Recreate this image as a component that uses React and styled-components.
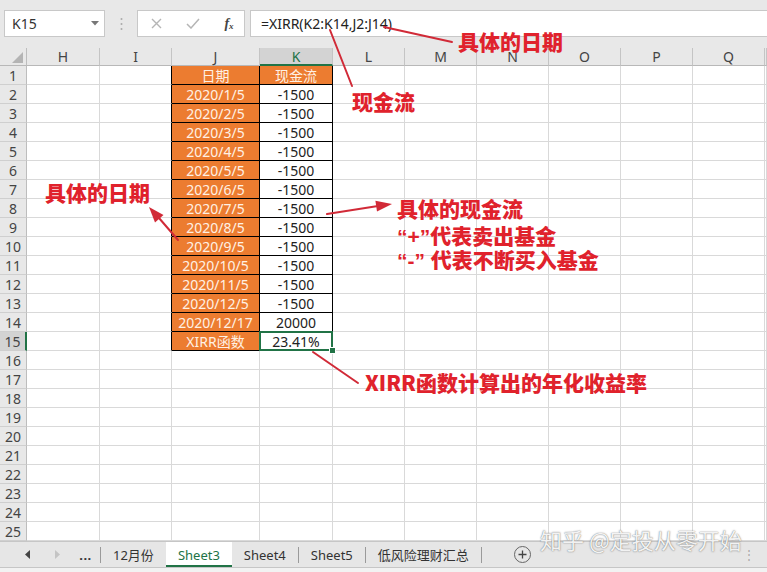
import React from 'react';
import styled, { createGlobalStyle } from 'styled-components';

const Global = createGlobalStyle`
  html, body { margin: 0; padding: 0; background: #fff; }
  body { font-family: "Noto Sans", "Noto Sans CJK SC", sans-serif; }
`;

const GREEN = '#217346';
const RED = '#e0222c';
const LINE_RED = '#d12a37';

const Page = styled.div`
  position: relative;
  width: 767px;
  height: 572px;
  overflow: hidden;
  display: flex;
  flex-direction: column;
  background: #fff;
  font-family: "Noto Sans", "Noto Sans CJK SC", sans-serif;
`;

const TopBar = styled.div`
  height: 48px;
  flex: none;
  box-sizing: border-box;
  padding: 10px 0 0 4px;
  background: #e8e8e8;
  display: flex;
  align-items: flex-start;
`;

const NameBox = styled.div`
  width: 101px;
  height: 27px;
  box-sizing: border-box;
  background: #fff;
  border: 1px solid #c8c8c8;
  display: flex;
  align-items: center;
  justify-content: space-between;
  padding: 0 5px 0 7px;
  font-size: 14px;
  color: #333;
`;

const Divider = styled.div`
  width: 32px;
  height: 27px;
  display: flex;
  align-items: center;
  justify-content: center;
`;

const ActionBox = styled.div`
  width: 108px;
  height: 27px;
  box-sizing: border-box;
  background: #fff;
  border: 1px solid #c8c8c8;
  display: grid;
  grid-template-columns: 36px 38px 34px;
  align-items: center;
  justify-items: center;
`;

const Fx = styled.span`
  font-family: "Liberation Serif", serif;
  font-style: italic;
  font-weight: bold;
  font-size: 14px;
  color: #444;
  & > sub {
    font-size: 9px;
    vertical-align: -1px;
  }
`;

const FormulaInput = styled.div`
  flex: 1;
  margin-left: 5px;
  height: 27px;
  box-sizing: border-box;
  background: #fff;
  border: 1px solid #c8c8c8;
  border-right: none;
  padding-left: 10px;
  display: flex;
  align-items: center;
  font-size: 14px;
  color: #222;
`;

const Sheet = styled.div`
  flex: none;
  display: grid;
  grid-template-columns: 27px 73px 72px 88px 73px 72px 72px 72px 72px 72px 72px 1fr;
  grid-template-rows: 18px repeat(25, 19px);
`;

const Corner = styled.div`
  box-sizing: border-box;
  background: #e8e8e8;
  border-right: 1px solid #bdbdbd;
  border-bottom: 1px solid #b8b8b8;
  display: flex;
  align-items: flex-end;
  justify-content: flex-end;
  padding: 0 3px 2px 0;
`;

const ColHead = styled.div`
  box-sizing: border-box;
  padding-top: 2px;
  background: ${p => (p.$active ? '#d3d3d3' : '#e8e8e8')};
  border-right: 1px solid #c4c4c4;
  border-bottom: ${p => (p.$active ? `2px solid ${GREEN}` : '1px solid #b8b8b8')};
  color: ${p => (p.$active ? GREEN : '#444')};
  font-size: 14px;
  line-height: 14px;
  text-align: center;
`;

const RowHead = styled.div`
  box-sizing: border-box;
  background: ${p => (p.$active ? '#d3d3d3' : '#e8e8e8')};
  border-right: ${p => (p.$active ? `2px solid ${GREEN}` : '1px solid #bdbdbd')};
  border-bottom: 1px solid #cfcfcf;
  color: #444;
  font-size: 14px;
  line-height: 19px;
  text-align: center;
`;

const Cell = styled.div`
  box-sizing: border-box;
  position: relative;
  border-right: 1px solid ${p => (p.$edgeR ? '#000' : '#d9d9d9')};
  border-bottom: 1px solid ${p => (p.$edgeB ? '#000' : '#d9d9d9')};
  background: ${p => (p.$orange ? '#ec7c30' : '#fff')};
  color: ${p => (p.$orange ? '#fff1e4' : '#222')};
  font-size: 14px;
  line-height: 19px;
  text-align: center;
  white-space: nowrap;
  ${p =>
    p.$selected &&
    `
    &::after {
      content: '';
      position: absolute;
      left: -1px;
      top: -1px;
      right: -1px;
      bottom: -1px;
      border: 2px solid ${GREEN};
    }
    &::before {
      content: '';
      position: absolute;
      right: -4px;
      bottom: -4px;
      width: 5px;
      height: 5px;
      background: ${GREEN};
      border: 1px solid #fff;
      z-index: 1;
    }
  `}
`;

const TabBar = styled.div`
  flex: none;
  height: 26px;
  box-sizing: border-box;
  border-top: 1px solid #c6c6c6;
  background: #e6e6e6;
  display: flex;
  align-items: stretch;
  padding-left: 13px;
`;

const NavButton = styled.div`
  width: 29px;
  display: flex;
  align-items: center;
  justify-content: center;
  color: #333;
  font-size: 13px;
  font-weight: bold;
  letter-spacing: 0.5px;
`;

const Sep = styled.div`
  width: 1px;
  height: 16px;
  background: #9a9a9a;
  align-self: center;
`;

const Tab = styled.div`
  display: flex;
  align-items: center;
  padding: 0 12px;
  font-size: 13px;
  color: ${p => (p.$active ? GREEN : '#333')};
  background: ${p => (p.$active ? '#fff' : 'transparent')};
  box-shadow: ${p => (p.$active ? `inset 0 -2px 0 ${GREEN}` : 'none')};
  white-space: nowrap;
`;

const PlusButton = styled.div`
  margin-left: 32px;
  align-self: center;
  width: 15px;
  height: 15px;
  border: 1px solid #666;
  border-radius: 50%;
  display: flex;
  align-items: center;
  justify-content: center;
`;

const ScrollGrip = styled.div`
  margin-left: auto;
  margin-right: 12px;
  align-self: center;
  color: #aaa;
  font-size: 12px;
`;

const BottomStrip = styled.div`
  flex: 1;
  background: #f2f2f2;
  border-top: 1px solid #c6c6c6;
`;

const Overlay = styled.svg`
  position: absolute;
  left: 0;
  top: 0;
  pointer-events: none;
`;

const Note = styled.div`
  position: absolute;
  left: ${p => p.$x}px;
  top: ${p => p.$y}px;
  font-family: "Noto Sans CJK SC", "Noto Sans", sans-serif;
  font-weight: 900;
  font-size: 21px;
  line-height: 17px;
  color: ${RED};
  white-space: nowrap;
`;

const Quote = styled.span`
  font-family: "Liberation Sans", "Noto Sans", sans-serif;
  font-weight: bold;
  font-size: 21px;
  line-height: 17px;
`;

const Watermark = styled.div`
  position: absolute;
  left: 540px;
  top: 525px;
  font-family: "Noto Sans CJK SC", sans-serif;
  font-size: 22px;
  line-height: 28px;
  color: rgba(255, 255, 255, 0.92);
  text-shadow: 0 0 1px rgba(90, 90, 90, 0.8), 0 0 2px rgba(90, 90, 90, 0.4);
  white-space: nowrap;
`;

const COLS = ['H', 'I', 'J', 'K', 'L', 'M', 'N', 'O', 'P', 'Q', ''];

const DATES = [
  '日期',
  '2020/1/5',
  '2020/2/5',
  '2020/3/5',
  '2020/4/5',
  '2020/5/5',
  '2020/6/5',
  '2020/7/5',
  '2020/8/5',
  '2020/9/5',
  '2020/10/5',
  '2020/11/5',
  '2020/12/5',
  '2020/12/17',
  'XIRR函数',
];

const FLOWS = [
  '现金流',
  '-1500', '-1500', '-1500', '-1500', '-1500', '-1500',
  '-1500', '-1500', '-1500', '-1500', '-1500', '-1500',
  '20000',
  '23.41%',
];

function renderRow(r) {
  const inTable = r <= 15;
  const cells = [
    <RowHead key={`h${r}`} $active={r === 15}>
      {r}
    </RowHead>,
  ];
  COLS.forEach((c, i) => {
    let content = '';
    let orange = false;
    let edgeR = false;
    let edgeB = false;
    let selected = false;
    if (inTable) {
      if (c === 'I') edgeR = true;
      if (c === 'J') {
        content = DATES[r - 1];
        orange = true;
        edgeR = true;
        edgeB = true;
      }
      if (c === 'K') {
        content = FLOWS[r - 1];
        orange = r === 1;
        edgeR = true;
        edgeB = true;
        selected = r === 15;
      }
    }
    cells.push(
      <Cell key={`${r}-${i}`} $orange={orange} $edgeR={edgeR} $edgeB={edgeB} $selected={selected}>
        {content}
      </Cell>
    );
  });
  return cells;
}

export default function App() {
  const rows = [];
  for (let r = 1; r <= 25; r++) rows.push(...renderRow(r));

  return (
    <>
      <Global />
      <Page>
        <TopBar>
          <NameBox>
            <span>K15</span>
            <svg width="8" height="5" viewBox="0 0 8 5">
              <polygon points="0,0 8,0 4,4.5" fill="#777" />
            </svg>
          </NameBox>
          <Divider>
            <svg width="3" height="14" viewBox="0 0 3 14">
              <circle cx="1.5" cy="2" r="1" fill="#aaa" />
              <circle cx="1.5" cy="7" r="1" fill="#aaa" />
              <circle cx="1.5" cy="12" r="1" fill="#aaa" />
            </svg>
          </Divider>
          <ActionBox>
            <svg width="11" height="11" viewBox="0 0 11 11">
              <path d="M1 1 L10 10 M10 1 L1 10" stroke="#b5b5b5" strokeWidth="1.4" />
            </svg>
            <svg width="14" height="11" viewBox="0 0 14 11">
              <path d="M1 6 L5 10 L13 1" stroke="#b5b5b5" strokeWidth="1.5" fill="none" />
            </svg>
            <Fx>
              f<sub>x</sub>
            </Fx>
          </ActionBox>
          <FormulaInput>=XIRR(K2:K14,J2:J14)</FormulaInput>
        </TopBar>

        <Sheet>
          <Corner>
            <svg width="11" height="11" viewBox="0 0 11 11">
              <polygon points="11,0 11,11 0,11" fill="#b4b4b4" />
            </svg>
          </Corner>
          {COLS.map((c, i) => (
            <ColHead key={i} $active={c === 'K'}>
              {c}
            </ColHead>
          ))}
          {rows}
        </Sheet>

        <TabBar>
          <NavButton>
            <svg width="6" height="9" viewBox="0 0 6 9">
              <polygon points="5,0 5,9 0,4.5" fill="#444" />
            </svg>
          </NavButton>
          <NavButton>
            <svg width="6" height="9" viewBox="0 0 6 9">
              <polygon points="1,0 1,9 6,4.5" fill="#c4c4c4" />
            </svg>
          </NavButton>
          <NavButton>...</NavButton>
          <Sep />
          <Tab>12月份</Tab>
          <Tab $active>Sheet3</Tab>
          <Tab>Sheet4</Tab>
          <Sep />
          <Tab>Sheet5</Tab>
          <Sep />
          <Tab>低风险理财汇总</Tab>
          <Sep />
          <PlusButton>
            <svg width="9" height="9" viewBox="0 0 9 9">
              <path d="M4.5 0.5 V8.5 M0.5 4.5 H8.5" stroke="#444" strokeWidth="1.3" />
            </svg>
          </PlusButton>
          <ScrollGrip>⋮</ScrollGrip>
        </TabBar>
        <BottomStrip />

        <Overlay width="767" height="572" viewBox="0 0 767 572">
          <g stroke={LINE_RED} strokeWidth="2" strokeLinecap="round" fill="none">
            <line x1="384" y1="27" x2="452" y2="42" />
            <line x1="330" y1="30" x2="352" y2="86" />
            <line x1="327" y1="214" x2="378" y2="206" />
            <line x1="178" y1="240" x2="159" y2="218" />
            <line x1="313" y1="352" x2="358" y2="383" />
          </g>
          <polygon points="392,204 377,211.5 375.4,200.8" fill={LINE_RED} />
          <polygon points="149,207 163.5,215 155,222.5" fill={LINE_RED} />
        </Overlay>

        <Note $x={458} $y={33}>具体的日期</Note>
        <Note $x={352} $y={93}>现金流</Note>
        <Note $x={45} $y={184}>具体的日期</Note>
        <Note $x={397} $y={200}>具体的现金流</Note>
        <Note $x={397} $y={227}>
          <Quote>“+”</Quote>代表卖出基金
        </Note>
        <Note $x={397} $y={251}>
          <Quote>“-” </Quote>代表不断买入基金
        </Note>
        <Note $x={365} $y={374}>XIRR函数计算出的年化收益率</Note>

        <Watermark>知乎 @定投从零开始</Watermark>
      </Page>
    </>
  );
}
